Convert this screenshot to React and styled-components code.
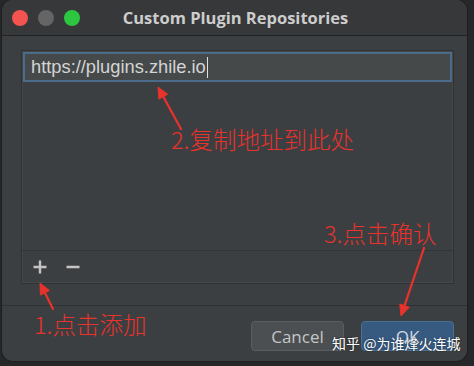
import React from "react";
import styled, { createGlobalStyle } from "styled-components";

const Global = createGlobalStyle`
  html, body {
    margin: 0;
    padding: 0;
    background: #262728;
    width: 474px;
    height: 366px;
    overflow: hidden;
  }
  body {
    font-family: "Inter", "Noto Sans", "Noto Sans CJK SC", sans-serif;
  }
`;

const Screen = styled.div`
  position: relative;
  width: 474px;
  height: 366px;
  padding: 0 0 0 2px;
  box-sizing: border-box;
`;

const Window = styled.div`
  width: 465px;
  height: 361px;
  border-radius: 11px;
  overflow: hidden;
  background: #3c3f41;
  display: flex;
  flex-direction: column;
  box-shadow: 0 0 0 1px #1f1f20;
`;

const TitleBar = styled.div`
  height: 35px;
  flex: none;
  background: #37383a;
  border-bottom: 1px solid #222324;
  display: flex;
  align-items: center;
  position: relative;
  padding-left: 10px;
  gap: 10px;
`;

const Light = styled.span`
  width: 16px;
  height: 16px;
  border-radius: 50%;
  background: ${(p) => p.$color};
`;

const Title = styled.div`
  position: absolute;
  left: 0;
  right: 0;
  padding-left: 2px;
  text-align: center;
  font-family: "Open Sans", "Liberation Sans", sans-serif;
  font-weight: 700;
  font-size: 16.5px;
  color: #cdcdcd;
  pointer-events: none;
`;

const Body = styled.div`
  flex: 1;
  display: flex;
  flex-direction: column;
`;

const Content = styled.div`
  padding: 14px 13px 0 19px;
`;

const ListPanel = styled.div`
  height: 232px;
  border: 1px solid #2f3133;
  box-shadow: inset 0 0 0 1px #45484a;
  display: flex;
  flex-direction: column;
`;

const ListArea = styled.div`
  flex: 1;
  padding: 1px;
`;

const UrlField = styled.div`
  height: 30px;
  box-sizing: border-box;
  border: 2px solid #4a6b8a;
  background: #45494a;
  display: flex;
  align-items: center;
  padding-left: 6px;
  font-family: "Liberation Sans", "Noto Sans", sans-serif;
  font-size: 18.3px;
  color: #d4d4d4;
`;

const Caret = styled.span`
  display: inline-block;
  width: 1px;
  height: 21px;
  background: #e0e0e0;
  margin-left: 1px;
`;

const Toolbar = styled.div`
  height: 32px;
  border-top: 1px solid #323436;
  display: flex;
  align-items: center;
  padding-left: 10px;
  gap: 17px;
`;

const ToolIcon = styled.svg`
  width: 16px;
  height: 16px;
  display: block;
`;

const Divider = styled.div`
  margin-top: 21px;
  height: 1px;
  background: #2e3032;
`;

const Footer = styled.div`
  display: flex;
  justify-content: flex-end;
  gap: 17px;
  padding: 15px 13px 0 0;
`;

const Button = styled.div`
  width: 93px;
  height: 30px;
  box-sizing: border-box;
  border-radius: 4px;
  display: flex;
  align-items: center;
  justify-content: center;
  font-family: "Open Sans", "Liberation Sans", sans-serif;
  font-size: 17px;
  color: ${(p) => (p.$primary ? "#cfd8e2" : "#c6c6c6")};
  background: ${(p) => (p.$primary ? "#375a81" : "#4b4f51")};
  border: 1px solid ${(p) => (p.$primary ? "#4b6f93" : "#5a5d5f")};
`;

const Note = styled.div`
  position: absolute;
  left: ${(p) => p.$x}px;
  top: ${(p) => p.$y}px;
  font-family: "Noto Sans CJK SC", "Noto Sans", sans-serif;
  font-weight: 300;
  font-size: 23.5px;
  color: #e8322c;
  white-space: nowrap;
  line-height: 1;
`;

const Watermark = styled.div`
  position: absolute;
  left: 332px;
  top: 336px;
  font-family: "Noto Sans CJK SC", "Noto Sans", sans-serif;
  font-size: 14px;
  color: #ffffff;
  white-space: nowrap;
  line-height: 1;
  text-shadow: 0 0 2px rgba(0, 0, 0, 0.6);
`;

const Overlay = styled.svg`
  position: absolute;
  left: 0;
  top: 0;
  width: 474px;
  height: 366px;
  pointer-events: none;
`;

function Arrow({ x1, y1, x2, y2 }) {
  const dx = x2 - x1;
  const dy = y2 - y1;
  const len = Math.hypot(dx, dy);
  const ux = dx / len;
  const uy = dy / len;
  const head = 11;
  const wing = 5;
  const bx = x2 - ux * head;
  const by = y2 - uy * head;
  const px = -uy * wing;
  const py = ux * wing;
  return (
    <g fill="#e8322c" stroke="#e8322c">
      <line x1={x1} y1={y1} x2={bx} y2={by} strokeWidth="2.2" strokeLinecap="round" />
      <polygon points={`${x2},${y2} ${bx + px},${by + py} ${bx - px},${by - py}`} strokeWidth="1" />
    </g>
  );
}

export default function App() {
  return (
    <>
      <Global />
      <Screen>
        <Window>
          <TitleBar>
            <Light $color="#f4544f" />
            <Light $color="#656566" />
            <Light $color="#2dc640" />
            <Title>Custom Plugin Repositories</Title>
          </TitleBar>
          <Body>
            <Content>
              <ListPanel>
                <ListArea>
                  <UrlField>
                    https://plugins.zhile.io
                    <Caret />
                  </UrlField>
                </ListArea>
                <Toolbar>
                  <ToolIcon viewBox="0 0 16 16">
                    <path d="M8 1.5v13M1.5 8h13" stroke="#c4c4c4" strokeWidth="2.4" />
                  </ToolIcon>
                  <ToolIcon viewBox="0 0 16 16">
                    <path d="M1.5 8h13" stroke="#c4c4c4" strokeWidth="2.4" />
                  </ToolIcon>
                </Toolbar>
              </ListPanel>
            </Content>
            <Divider />
            <Footer>
              <Button>Cancel</Button>
              <Button $primary>OK</Button>
            </Footer>
          </Body>
        </Window>
        <Note $x={171} $y={128}>2.复制地址到此处</Note>
        <Note $x={324} $y={222}>3.点击确认</Note>
        <Note $x={34} $y={313}>1.点击添加</Note>
        <Overlay viewBox="0 0 474 366">
          <Arrow x1={181} y1={129} x2={158} y2={87} />
          <Arrow x1={424} y1={248} x2={401} y2={316} />
          <Arrow x1={53} y1={309} x2={40} y2={283} />
        </Overlay>
        <Watermark>知乎 @为谁烽火连城</Watermark>
      </Screen>
    </>
  );
}
